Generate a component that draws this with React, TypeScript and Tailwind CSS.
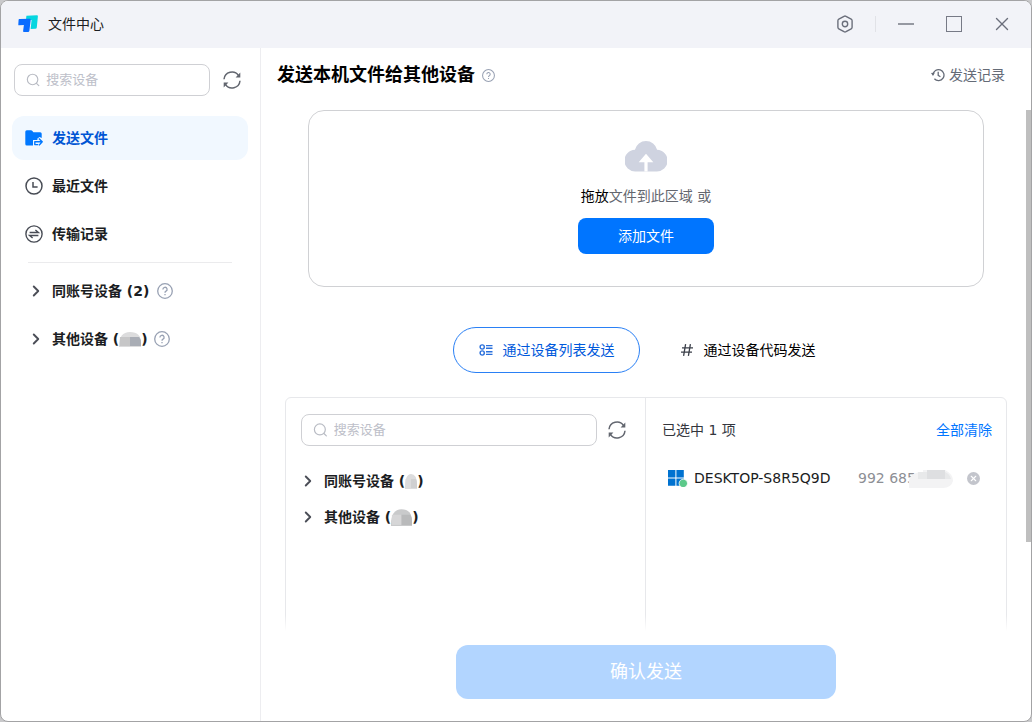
import React from "react";
import { ChevronRight, X } from "lucide-react";

type IconProps = { className?: string };

const LogoIcon = () => (
  <svg width="20" height="18" viewBox="0 0 20 18" aria-hidden="true">
    <path d="M8.4 0.8 L19 0.2 Q20 0.2 19.9 1.2 L18.8 12.4 Q18.6 13.6 17.4 13.7 L12.6 13.9 L13.6 5 L8 4.6 Z" fill="#06d6e0" />
    <path d="M1.4 4 L11.6 3.7 Q12.9 3.7 12.7 4.9 L11.4 15.8 Q11.2 17 10 17 L5.8 17 Q5 17 5.1 16 L5.9 10 L1 10.3 Q0.2 10.3 0.3 9.4 L0.6 4.8 Q0.7 4.1 1.4 4 Z" fill="#0a6cff" />
  </svg>
);

const SearchIcon = () => (
  <svg width="16" height="16" viewBox="0 0 16 16" fill="none" stroke="#b9bcc4" strokeWidth="1.3" strokeLinecap="round" aria-hidden="true">
    <circle cx="7.4" cy="7.4" r="5.9" />
    <path d="M11.8 11.8 L14.4 14.4" />
  </svg>
);

const RefreshIcon = () => (
  <svg width="18" height="18" viewBox="0 0 18 18" fill="none" stroke="#62666f" strokeWidth="1.5" aria-hidden="true">
    <path d="M1 8.3 A8 8 0 0 1 15.6 4.6" />
    <path d="M17 9.7 A8 8 0 0 1 2.4 13.4" />
    <path d="M17.3 1.6 V6.4 H12.6 Z" fill="#62666f" stroke="none" />
    <path d="M0.7 16.4 V11.6 H5.4 Z" fill="#62666f" stroke="none" />
  </svg>
);

const HelpIcon = ({ className }: IconProps) => (
  <svg className={className} viewBox="0 0 16 16" fill="none" stroke="#98a1b3" strokeWidth="1.3" aria-hidden="true">
    <circle cx="8" cy="8" r="7.3" />
    <path d="M5.9 6.4 A2.1 2.1 0 1 1 9 8.2 Q8 8.7 8 9.7" />
    <path d="M8 11 V12.3" />
  </svg>
);

const SendFolderIcon = () => (
  <svg width="18" height="18" viewBox="0 0 18 18" fill="none" aria-hidden="true">
    <path d="M0.3 2.8 Q0.3 1.2 1.8 1.2 H6 Q6.8 1.2 7.4 1.9 L8.4 3.2 H15.2 Q16.7 3.2 16.7 4.7 V9 L14.6 8 L12.4 9.6 V11 H8 V16.4 H1.8 Q0.3 16.4 0.3 14.9 Z" fill="#0078ff" />
    <path d="M13.8 9.6 L17.2 12.8 H9.8 V15.6 H13.2 M17.2 12.8 L14 16.4" stroke="#0078ff" strokeWidth="1.4" strokeLinejoin="round" />
  </svg>
);

const ClockIcon = () => (
  <svg width="18" height="18" viewBox="0 0 18 18" fill="none" stroke="#484c55" strokeWidth="1.5" aria-hidden="true">
    <circle cx="9" cy="9" r="8" />
    <path d="M8 5 V10 H12.6" />
  </svg>
);

const TransferIcon = () => (
  <svg width="18" height="18" viewBox="0 0 18 18" fill="none" stroke="#484c55" strokeWidth="1.4" aria-hidden="true">
    <circle cx="9" cy="9" r="8.1" />
    <path d="M4.6 7.5 H13.4 L10.4 5" />
    <path d="M13.4 10.5 H4.6 L7.6 13" />
  </svg>
);

const SettingsIcon = () => (
  <svg width="16" height="18" viewBox="0 0 16 18" fill="none" stroke="#6b6f7b" strokeWidth="1.4" strokeLinejoin="round" aria-hidden="true">
    <path d="M7 1.3 Q8 0.8 9 1.3 L14.2 4.2 Q15.1 4.7 15.1 5.7 V12.3 Q15.1 13.3 14.2 13.8 L9 16.7 Q8 17.2 7 16.7 L1.8 13.8 Q0.9 13.3 0.9 12.3 V5.7 Q0.9 4.7 1.8 4.2 Z" />
    <circle cx="8" cy="9" r="2.7" />
  </svg>
);

const HistoryIcon = () => (
  <svg width="14" height="14" viewBox="0 0 14 14" fill="none" stroke="#656b77" strokeWidth="1.3" aria-hidden="true">
    <path d="M2 6.6 A5.5 5.5 0 1 1 3.4 10.8" />
    <path d="M7.2 3.8 V7.4 L9.4 8.7" />
    <path d="M0 5 L4 4.6 L2 8 Z" fill="#656b77" stroke="none" />
  </svg>
);

const CloudIcon = () => (
  <svg width="42" height="32" viewBox="0 0 42 32" aria-hidden="true">
    <path d="M10.5 31.4 A10.8 10.8 0 0 1 9.9 9.8 A11.4 11.4 0 0 1 32.1 9.8 A10.8 10.8 0 0 1 31.5 31.4 Z" fill="#cfd3e0" />
    <path d="M21 13.8 L28.3 22.2 H22.6 V31.6 H19.4 V22.2 H13.7 Z" fill="#fff" />
  </svg>
);

const ListIcon = () => (
  <svg width="14" height="14" viewBox="0 0 14 14" fill="none" stroke="#2a70dc" strokeWidth="1.4" aria-hidden="true">
    <circle cx="3.2" cy="4" r="2.1" />
    <circle cx="3.2" cy="10" r="2.1" />
    <path d="M7 2.6 H13.5 M7 5.2 H13.5 M7 8.8 H13.5 M7 11.4 H13.5" />
  </svg>
);

const HashIcon = () => (
  <svg width="14" height="14" viewBox="0 0 14 14" fill="none" stroke="#3b3f49" strokeWidth="1.3" aria-hidden="true">
    <path d="M5.6 1.2 L3.6 12.8 M10.4 1.2 L8.4 12.8 M2 4.8 H13 M1 9.2 H12" />
  </svg>
);

const WindowsIcon = () => (
  <svg width="20" height="18" viewBox="0 0 20 18" aria-hidden="true">
    <path d="M0 1 H7.4 V8.4 H0 Z M8.4 1 H15.8 V8.4 H8.4 Z M0 9.4 H7.4 V16.8 H0 Z M8.4 9.4 H15.8 V16.8 H8.4 Z" fill="#0072d0" />
    <circle cx="15.3" cy="14.4" r="4.2" fill="#5cc98a" stroke="#fff" strokeWidth="0.8" />
  </svg>
);

// Count hidden behind a blocky patch
const MaskedCount = ({ className, tones }: { className: string; tones: string[] }) => (
  <svg className={className} viewBox="0 0 24 16" preserveAspectRatio="none" aria-hidden="true">
    <path d="M0 15 Q0 1 12 1 Q24 1 24 12 V16 H0 Z" fill={tones[0]} />
    <path d="M1 6 H12 V15 H1 Z" fill={tones[1]} />
    <path d="M12 6 H22 Q24 8 24 12 V15 H12 Z" fill={tones[2]} />
  </svg>
);

const SearchBox = ({ id }: { id: string }) => (
  <label
    htmlFor={id}
    className="flex h-8 min-w-0 flex-1 items-center gap-1.5 rounded-lg border border-[#cfd0d4] bg-white pl-[11px]">
    <SearchIcon />
    <input
      id={id}
      type="text"
      aria-label="搜索设备"
      placeholder="搜索设备"
      className="w-full min-w-0 bg-transparent text-[13px] text-[#1f2329] outline-none placeholder:text-[#bdc0c9]"
    />
  </label>
);

const TitleBar = () => (
  <header className="flex h-[47px] shrink-0 items-center bg-[#f2f3f8] pb-0.5 pl-[17px] pr-[5px]">
    <LogoIcon />
    <h1 className="ml-2.5 flex-1 text-sm text-[#1b1d22]">文件中心</h1>
    <button type="button" aria-label="设置" className="flex h-8 w-12 items-center justify-center">
      <SettingsIcon />
    </button>
    <span className="mx-1.5 h-4 w-px bg-[#e1e2e7]" />
    <button type="button" aria-label="最小化" className="flex h-8 w-12 items-center justify-center">
      <span className="h-0.5 w-4 bg-[#9699a2]" />
    </button>
    <button type="button" aria-label="最大化" className="flex h-8 w-12 items-center justify-center">
      <span className="size-4 border border-[#777a86]" />
    </button>
    <button type="button" aria-label="关闭" className="flex h-8 w-12 items-center justify-center">
      <X className="size-[22px] text-[#6b6f7b]" strokeWidth={1.5} />
    </button>
  </header>
);

const Sidebar = () => (
  <aside className="w-[260px] shrink-0 border-r border-[#ededf0] pl-[11px] pr-3 pt-4">
    <div className="flex items-center gap-[13px] pl-0.5 pr-[7px]">
      <SearchBox id="sidebar-search" />
      <button type="button" aria-label="刷新">
        <RefreshIcon />
      </button>
    </div>

    <nav className="mt-5 flex flex-col gap-1 text-sm font-bold text-[#1b1d22]">
      <a href="#send" className="flex h-11 items-center gap-[9px] rounded-xl bg-[#f1f8ff] px-[13px] text-[#0055d4]">
        <SendFolderIcon />
        发送文件
      </a>
      <a href="#recent" className="flex h-11 items-center gap-[9px] rounded-xl px-[13px]">
        <ClockIcon />
        最近文件
      </a>
      <a href="#transfers" className="flex h-11 items-center gap-[9px] rounded-xl px-[13px]">
        <TransferIcon />
        传输记录
      </a>
    </nav>

    <hr className="mx-4 mt-1.5 border-[#ebebed]" />

    <div className="mt-1.5 flex flex-col gap-1 text-sm font-bold text-[#1b1d22]">
      <button type="button" className="flex h-11 items-center pl-[15px]">
        <ChevronRight className="size-[18px] text-[#4b4e57]" strokeWidth={2.5} />
        <span className="ml-[7px]">同账号设备 (2)</span>
        <HelpIcon className="ml-2 size-4" />
      </button>
      <button type="button" className="flex h-11 items-center pl-[15px]">
        <ChevronRight className="size-[18px] text-[#4b4e57]" strokeWidth={2.5} />
        <span className="ml-[7px] flex items-center">
          其他设备&nbsp;(
          <MaskedCount className="h-4 w-[22px]" tones={["#dcdcdd", "#c6c6c7", "#a9adb5"]} />)
        </span>
        <HelpIcon className="ml-1.5 size-4" />
      </button>
    </div>
  </aside>
);

const DropZone = () => (
  <section className="mx-[47px] flex flex-col items-center rounded-2xl border border-[#d0d1d4] pb-8 pt-[29px]">
    <CloudIcon />
    <p className="mt-3.5 text-sm leading-5 text-[#63666e]">
      <span className="text-black">拖放</span>文件到此区域 或
    </p>
    <button type="button" className="mt-3 h-9 w-[136px] rounded-lg bg-[#0075ff] text-sm text-white">
      添加文件
    </button>
  </section>
);

const SendTabs = () => (
  <div className="mt-10 flex justify-center gap-4">
    <button
      type="button"
      className="flex h-[46px] items-center gap-2.5 rounded-full border border-[#2a80f5] px-6 pl-[25px] text-sm text-[#0059db]">
      <ListIcon />
      通过设备列表发送
    </button>
    <button type="button" className="flex h-[46px] items-center gap-2.5 rounded-full px-6 text-sm text-black">
      <HashIcon />
      通过设备代码发送
    </button>
  </div>
);

const DevicePanel = () => (
  <section className="mx-6 mt-6 flex h-[320px] rounded-t-md border border-[#e7e8eb]">
    <div className="w-1/2 border-r border-[#e7e8eb] pl-[15px] pt-4">
      <div className="flex items-center gap-[11px] pr-[19px]">
        <SearchBox id="device-search" />
        <button type="button" aria-label="刷新">
          <RefreshIcon />
        </button>
      </div>
      <div className="mt-[17px] flex flex-col text-sm font-bold text-[#1b1d22]">
        <button type="button" className="flex h-9 items-center">
          <ChevronRight className="-ml-0.5 size-[18px] text-[#4b4e57]" strokeWidth={2.5} />
          <span className="ml-[7px] flex items-center">
            同账号设备&nbsp;(
            <MaskedCount className="h-4 w-3" tones={["#dcdcdd", "#dcdcdd", "#d0d0d1"]} />)
          </span>
        </button>
        <button type="button" className="flex h-9 items-center">
          <ChevronRight className="-ml-0.5 size-[18px] text-[#4b4e57]" strokeWidth={2.5} />
          <span className="ml-[7px] flex items-center">
            其他设备&nbsp;(
            <MaskedCount className="h-[18px] w-[21px]" tones={["#c9cacb", "#d6d6d7", "#b9babb"]} />)
          </span>
        </button>
      </div>
    </div>

    <div className="w-1/2 pl-4 pr-3.5 pt-[22px]">
      <div className="flex items-center justify-between text-sm leading-5">
        <span className="text-[#33363d]">已选中 1 项</span>
        <button type="button" className="text-[#0075ff]">
          全部清除
        </button>
      </div>
      <div className="mt-7 flex items-center pl-1.5 pr-3 text-sm leading-5">
        <WindowsIcon />
        <span className="ml-1.5 text-[#1b1d22]">DESKTOP-S8R5Q9D</span>
        <span className="relative ml-auto mr-3.5 w-[95px] text-[#8d8f95]">
          992 685 7
          <svg className="absolute left-[51px] top-0 h-5 w-11" viewBox="0 0 44 20" aria-hidden="true">
            <path d="M0 20 V12 Q2 4 14 4 V2 H36 Q44 6 44 13 Q42 20 34 20 Z" fill="#f3f3f4" />
            <path d="M18 2 H36 V11 H18 Z" fill="#dedfe1" />
            <path d="M9 4 H18 V11 H9 Z M36 4 Q41 6 42 11 H36 Z" fill="#e8e9ea" />
          </svg>
        </span>
        <button type="button" aria-label="移除" className="flex size-[13px] items-center justify-center rounded-full bg-[#c3c5cc]">
          <X className="size-[9px] text-white" strokeWidth={3} />
        </button>
      </div>
    </div>
  </section>
);

const App = () => {
  return (
    <div className="h-screen bg-[#c9c9cb] font-['DejaVu_Sans','Noto_Sans_CJK_SC',sans-serif]">
      <div className="flex h-full flex-col overflow-hidden rounded-lg border border-[#a3a3a5] bg-white">
        <TitleBar />
        <div className="flex min-h-0 flex-1">
          <Sidebar />
          <main className="flex min-w-0 flex-1 flex-col">
            <div className="flex h-[62px] shrink-0 items-center pb-2 pl-4 pr-[26px]">
              <h2 className="text-lg font-bold text-black">发送本机文件给其他设备</h2>
              <HelpIcon className="ml-[7px] size-[13px]" />
              <button type="button" className="ml-auto flex items-center gap-1 text-sm text-[#656b77]">
                <HistoryIcon />
                发送记录
              </button>
            </div>

            <div className="relative min-h-0 flex-1 overflow-hidden">
              <DropZone />
              <SendTabs />
              <DevicePanel />
              <div className="absolute inset-x-0 bottom-0 h-4 bg-linear-to-b from-white/0 to-white" />
              <div className="absolute right-0 top-0 h-[83%] w-[5px] bg-[#bfbfbf]" />
            </div>

            <footer className="flex shrink-0 justify-center pb-[22px] pt-3.5">
              <button type="button" className="h-[54px] w-[380px] rounded-xl bg-[#b2d5ff] text-lg text-white">
                确认发送
              </button>
            </footer>
          </main>
        </div>
      </div>
    </div>
  );
};

export default App;
